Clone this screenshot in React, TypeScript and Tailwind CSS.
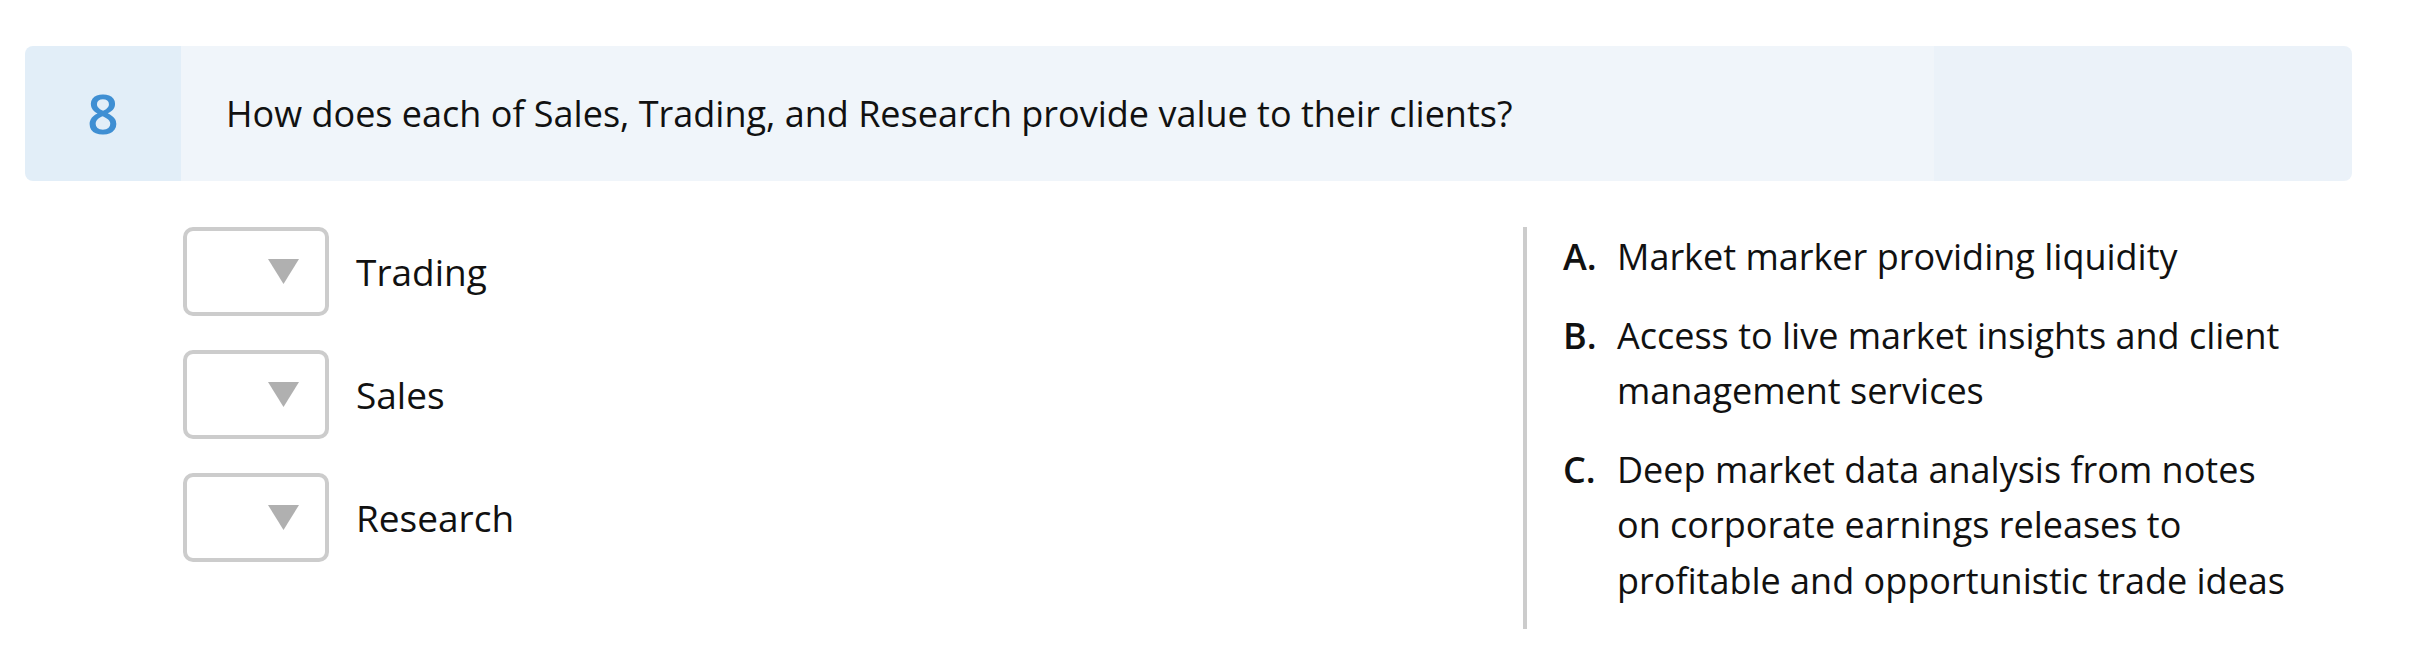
import React from "react";

const font = { fontFamily: '"Open Sans", "Noto Sans", sans-serif' };

function Triangle() {
  return (
    <svg width="31" height="25" viewBox="0 0 31 25" aria-hidden="true">
      <polygon points="0,0 31,0 15.5,25" fill="#b0b0b0" />
    </svg>
  );
}

function DropRow({ label }: { label: string }) {
  return (
    <div className="flex items-center">
      <div className="flex h-[89px] w-[146px] items-center justify-end rounded-[10px] border-4 border-[#cccccc] bg-white pr-[26px]">
        <Triangle />
      </div>
      <span className="ml-[27px] text-[37px] leading-[56px] text-[#111111]">{label}</span>
    </div>
  );
}

const answers: { key: string; text: string }[] = [
  { key: "A.", text: "Market marker providing liquidity" },
  { key: "B.", text: "Access to live market insights and client management services" },
  {
    key: "C.",
    text: "Deep market data analysis from notes on corporate earnings releases to profitable and opportunistic trade ideas",
  },
];

export default function App() {
  return (
    <div className="h-[662px] w-full bg-white" style={font}>
      <div className="ml-[25px] mr-[58px] pt-[46px]">
        <div className="flex h-[135px] overflow-hidden rounded-[8px]">
          <div className="flex w-[156px] items-center justify-center bg-[#e2eef8] text-[55px] font-semibold text-[#3f8fd3]">
            8
          </div>
          <div className="flex flex-1 items-center bg-[#f0f5fa] pl-[45px] text-[36px] text-[#111111]">
            How does each of Sales, Trading, and Research provide value to their clients?
          </div>
          <div className="w-[418px] bg-[#ebf2f9]" />
        </div>
      </div>
      <div className="mt-[46px] flex">
        <div className="flex w-[1523px] flex-col gap-[34px] pl-[183px]">
          <DropRow label="Trading" />
          <DropRow label="Sales" />
          <DropRow label="Research" />
        </div>
        <div className="border-l-4 border-[#cccccc] pb-[21px] pl-[36px]">
          <ol className="flex w-[760px] flex-col gap-[23px] pt-[2px]">
            {answers.map((a) => (
              <li key={a.key} className="flex text-[36px] leading-[55.5px] text-[#111111]">
                <span className="w-[54px] shrink-0 font-semibold">{a.key}</span>
                <span className="w-[685px]">{a.text}</span>
              </li>
            ))}
          </ol>
        </div>
      </div>
    </div>
  );
}
